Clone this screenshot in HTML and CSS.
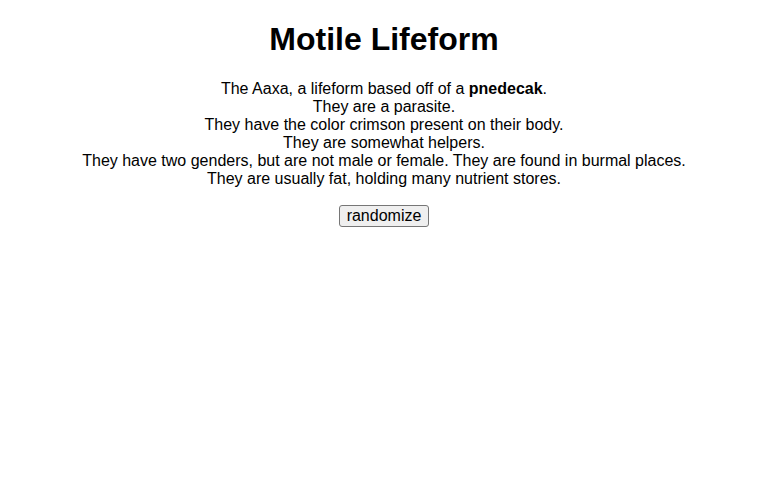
FILE: index.html
```html
<!DOCTYPE html>
<html lang="en">
<head>
    <meta charset="UTF-8">
    <meta name="viewport" content="width=device-width, initial-scale=1.0">
    <title>Motile Lifeform</title>
    <link rel="stylesheet" href="styles.css">
</head>
<body>
    <h1>Motile Lifeform</h1>
    <div id="description" class="description">
        The Aaxa, a lifeform based off of a <b>pnedecak</b>.<br>
        They are a parasite.<br>
        They have the color crimson present on their body.<br>
        They are somewhat helpers.<br>
        They have two genders, but are not male or female. They are found in burmal places.<br>
        They are usually fat, holding many nutrient stores.
    </div>
    <button class="randomize">randomize</button>
</body>
</html>
```

FILE: styles.css
```css
body {
    font-family: "Liberation Sans", Arial, sans-serif;
    text-align: center;
    color: #000;
    background: #fff;
    margin: 8px;
}
h1 {
    font-size: 32px;
    margin: 13px 0 22px;
}
.description {
    font-size: 16px;
    line-height: 18px;
}
.randomize {
    font-family: "Liberation Sans", Arial, sans-serif;
    font-size: 16px;
    margin-top: 17px;
    padding: 1px 7px;
    background: #efefef;
    border: 1px solid #767676;
    border-radius: 3px;
    color: #000;
}
```
